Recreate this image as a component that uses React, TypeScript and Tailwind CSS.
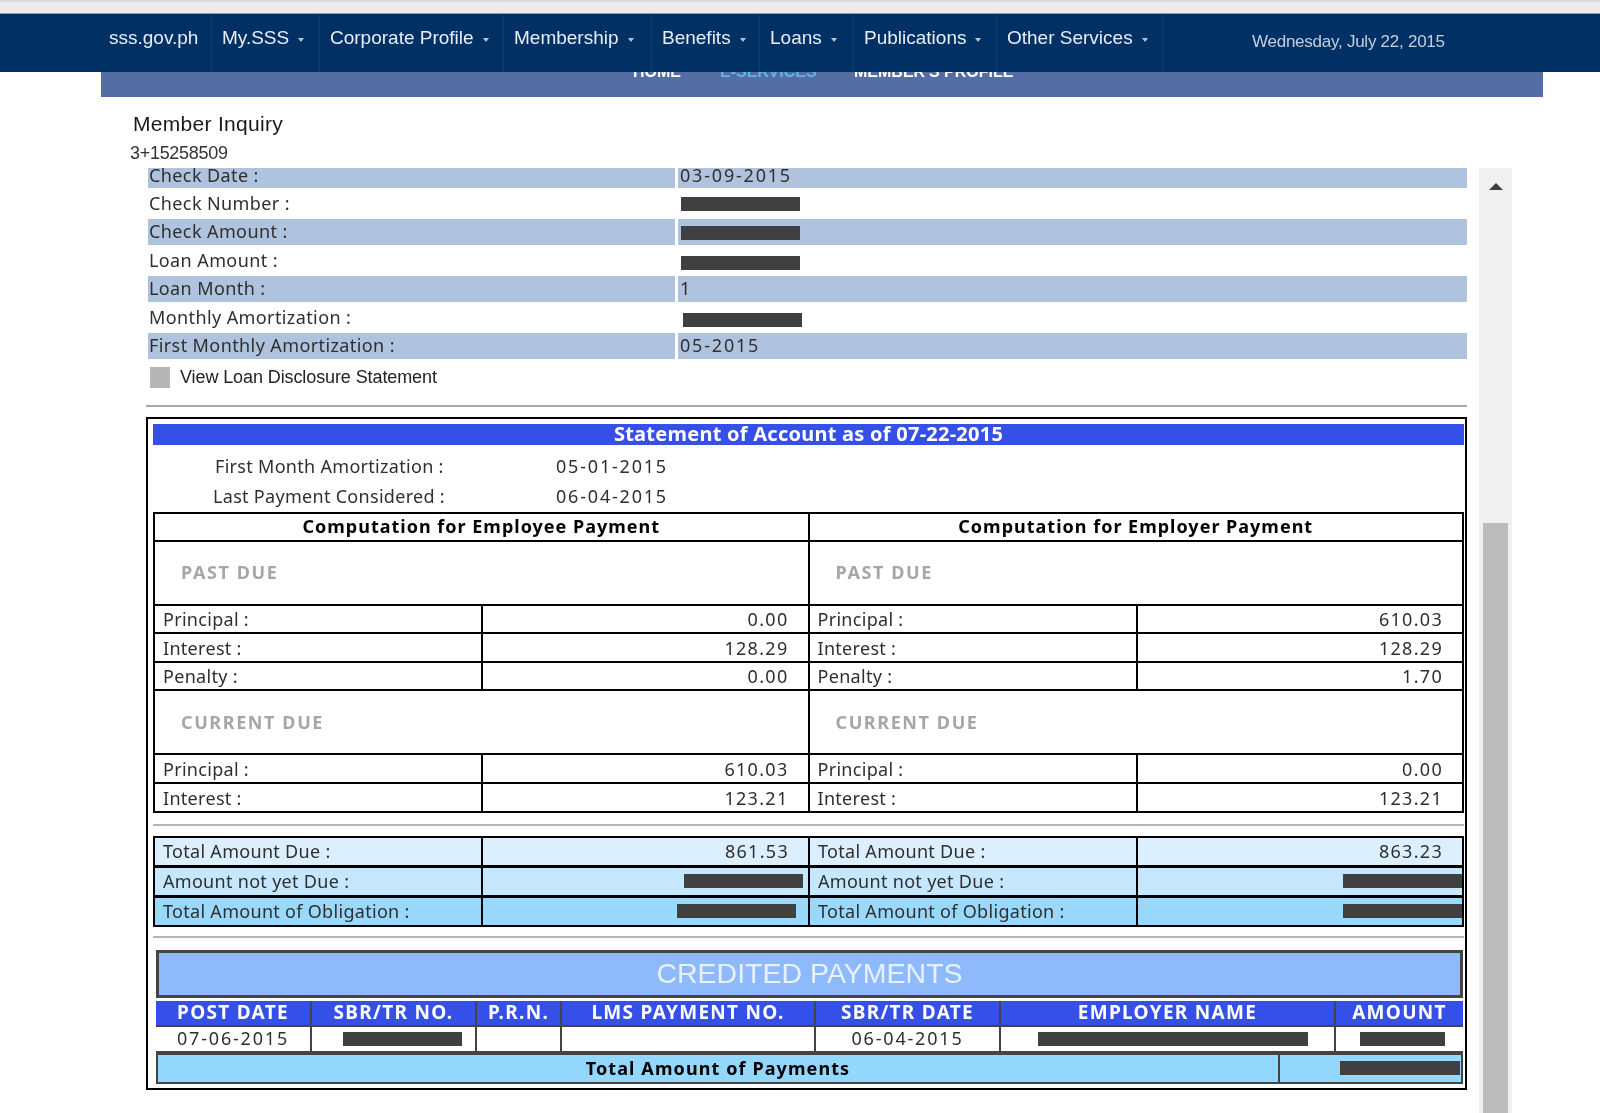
const navItems = [
  { label: 'sss.gov.ph', width: 'w-[111px]', caret: false },
  { label: 'My.SSS', width: 'w-[108px]', caret: true },
  { label: 'Corporate Profile', width: 'w-[184px]', caret: true },
  { label: 'Membership', width: 'w-[148px]', caret: true },
  { label: 'Benefits', width: 'w-[108px]', caret: true },
  { label: 'Loans', width: 'w-[94px]', caret: true },
  { label: 'Publications', width: 'w-[143px]', caret: true },
  { label: 'Other Services', width: 'w-[166px]', caret: true },
];

const loanRows = [
  { label: 'Check Date :', value: '03-09-2015', shaded: true },
  { label: 'Check Number :', shaded: false, redact: 'ml-[1px] mt-[2px]' },
  { label: 'Check Amount :', shaded: true, redact: 'ml-[1px] mt-[3px]' },
  { label: 'Loan Amount :', shaded: false, redact: 'ml-[1px] mt-[5px]' },
  { label: 'Loan Month :', value: '1', shaded: true },
  { label: 'Monthly Amortization :', shaded: false, redact: 'ml-[3px] mt-[5px]' },
  { label: 'First Monthly Amortization :', value: '05-2015', shaded: true },
];

const employee = {
  title: 'Computation for Employee Payment',
  past: ['0.00', '128.29', '0.00'],
  current: ['610.03', '123.21'],
};
const employer = {
  title: 'Computation for Employer Payment',
  past: ['610.03', '128.29', '1.70'],
  current: ['0.00', '123.21'],
};

const creditColumns = [
  { label: 'POST DATE', width: 'w-[156px]' },
  { label: 'SBR/TR NO.', width: 'w-[165px]' },
  { label: 'P.R.N.', width: 'w-[85px]' },
  { label: 'LMS PAYMENT NO.', width: 'w-[254px]' },
  { label: 'SBR/TR DATE', width: 'w-[185px]' },
  { label: 'EMPLOYER NAME', width: 'w-[335px]' },
  { label: 'AMOUNT', width: 'flex-1' },
];

function Redacted({ className }: { className: string }) {
  return <div className={`h-[14px] bg-[#404040] ${className}`} />;
}

function Caret() {
  return <span className="ml-[9px] mt-[3px] inline-block border-x-[3.5px] border-t-[4px] border-x-transparent border-t-[#b4c2d4]" />;
}

function AmountRow({ label, value, last }: { label: string; value: string; last?: boolean }) {
  return (
    <div className={`flex items-center border-black ${last ? 'h-[27px]' : 'h-[28.5px] border-b-2'}`}>
      <div className="flex h-full w-[328px] items-center border-r-2 border-black pl-[8px] pt-[2px]">{label}</div>
      <div className="flex-1 pr-[19px] pt-[2px] text-right tracking-[1.3px]">{value}</div>
    </div>
  );
}

function DueHeading({ children }: { children: string }) {
  return (
    <div className="flex h-[64px] items-center border-b-2 border-black pl-[26px] font-bold tracking-[1.6px] text-[#a6a6a6]">
      {children}
    </div>
  );
}

function Computation({ data, first }: { data: typeof employee; first?: boolean }) {
  return (
    <div className={`flex-1 ${first ? 'border-r-2 border-black' : ''}`}>
      <div className="flex h-[28px] items-center justify-center border-b-2 border-black font-bold tracking-[1px] text-black">{data.title}</div>
      <DueHeading>PAST DUE</DueHeading>
      <AmountRow label="Principal :" value={data.past[0]} />
      <AmountRow label="Interest :" value={data.past[1]} />
      <AmountRow label="Penalty :" value={data.past[2]} />
      <DueHeading>CURRENT DUE</DueHeading>
      <AmountRow label="Principal :" value={data.current[0]} />
      <AmountRow label="Interest :" value={data.current[1]} last />
    </div>
  );
}

function TotalRow({ label, left, right, color, redactLeft }: { label: string; left?: string; right?: string; color: string; redactLeft?: string }) {
  return (
    <div className={`flex h-[27px] ${color}`}>
      <div className="flex w-[655px]">
        <div className="flex w-[328px] items-center border-r-2 border-black pl-[8px]">{label}</div>
        <div className={`flex flex-1 items-center justify-end border-r-2 border-black tracking-[1.3px] ${left ? 'pr-[19px]' : ''}`}>
          {left ?? <Redacted className={`w-[119px] ${redactLeft}`} />}
        </div>
      </div>
      <div className="flex flex-1">
        <div className="flex w-[328px] items-center border-r-2 border-black pl-[8px]">{label}</div>
        <div className={`flex flex-1 items-center justify-end tracking-[1.3px] ${right ? 'pr-[19px]' : ''}`}>
          {right ?? <Redacted className="w-[119px]" />}
        </div>
      </div>
    </div>
  );
}

export default function App() {
  return (
    <div className="h-[1113px] w-[1600px] overflow-hidden bg-white font-['Noto_Sans',sans-serif] text-[18px] tracking-[0.3px] text-[#2f2f2f] blur-[0.5px]">
      {/* browser edge */}
      <div className="h-[14px] border-t-2 border-b border-t-[#d9d9d9] border-b-[#9a9a9a] bg-[#ececec]" />

      {/* main nav */}
      <div className="relative z-10 flex h-[58px] bg-[#003064] pl-[101px] font-['Liberation_Sans',sans-serif] text-[19px] tracking-normal text-[#e6edf5]">
        {navItems.map((item) => (
          <div key={item.label} className={`flex items-center border-r border-[#0a3f72] pb-[9px] pl-[10px] first:pl-[8px] ${item.width}`}>
            {item.label}
            {item.caret && <Caret />}
          </div>
        ))}
        <div className="pl-[89px] pt-[15px] text-[17px] tracking-[-0.25px] text-[#c3cfdc]">Wednesday, July 22, 2015</div>
      </div>

      {/* sub nav, mostly hidden under the main nav */}
      <div className="ml-[101px] h-[25px] w-[1442px] overflow-hidden bg-[#546ea3]">
        <div className="-mt-[12px] flex pl-[532px] font-['Liberation_Sans',sans-serif] text-[16px] font-bold tracking-normal text-white">
          <span className="w-[87px]">HOME</span>
          <span className="w-[134px] text-[#5fb4f0]">E-SERVICES</span>
          <span>MEMBER'S PROFILE</span>
        </div>
      </div>

      <div className="pl-[133px] pt-[13px] font-['Liberation_Sans',sans-serif] text-[21px] leading-[28px] tracking-[0.3px] text-[#1a1a1a]">Member Inquiry</div>
      <div className="h-[30px] pl-[130px] pt-[3px] font-['Liberation_Sans',sans-serif] text-[18px] leading-[24px] tracking-[-0.3px] text-[#333]">3+15258509</div>

      <div className="ml-[146px] flex">
        <div className="w-[1321px]">
          {/* loan details, first row clipped by the scroll */}
          <div className="flex flex-col gap-[2.5px] pl-[2px] tracking-[0.4px]">
            {loanRows.map((row, i) => (
              <div key={row.label} className={`flex gap-[3px] ${i === 0 ? 'h-[19.5px]' : 'h-[26px]'}`}>
                <div className={`flex w-[527px] items-center pl-[1px] ${i === 0 ? 'pb-[5px]' : ''} ${row.shaded ? 'bg-[#afc3de]' : ''}`}>{row.label}</div>
                <div className={`flex flex-1 items-center pl-[2px] tracking-[1.8px] ${i === 0 ? 'pb-[5px]' : ''} ${row.shaded ? 'bg-[#afc3de]' : ''}`}>
                  {row.value ?? <Redacted className={`w-[119px] ${row.redact}`} />}
                </div>
              </div>
            ))}
          </div>

          <div className="flex h-[34px] items-center pl-[4px] pt-[3px]">
            <div className="h-[21px] w-[20px] bg-[#b5b5b5]" />
            <span className="ml-[10px] font-['Liberation_Sans',sans-serif] text-[18px] tracking-[-0.1px] text-[#222]">View Loan Disclosure Statement</span>
          </div>

          <div className="mt-[12px] h-[2px] bg-[#a8a8a8]" />

          {/* statement box */}
          <div className="mt-[10px] h-[673px] border-2 border-black pl-[5px] pr-[1px] pt-[5px]">
            <div className="flex h-[21px] items-center justify-center bg-[#3550e8] text-[20px] font-bold tracking-[0.25px] text-white">
              Statement of Account as of 07-22-2015
            </div>
            <div className="flex h-[36px] items-center pt-[8px]">
              <span className="ml-[62px] w-[341px]">First Month Amortization :</span>
              <span className="tracking-[1.8px]">05-01-2015</span>
            </div>
            <div className="flex h-[30px] items-center pt-[2px]">
              <span className="ml-[60px] w-[343px]">Last Payment Considered :</span>
              <span className="tracking-[1.8px]">06-04-2015</span>
            </div>

            <div className="mt-[1px] flex border-2 border-black">
              <Computation data={employee} first />
              <Computation data={employer} />
            </div>

            <div className="mt-[11px] h-[2px] bg-[#b5b5b5]" />

            <div className="mt-[10px] flex flex-col gap-[3px] border-2 border-black bg-black">
              <TotalRow label="Total Amount Due :" left="861.53" right="863.23" color="bg-[#dceffe]" />
              <TotalRow label="Amount not yet Due :" color="bg-[#c5e8ff]" redactLeft="mr-[5px]" />
              <TotalRow label="Total Amount of Obligation :" color="bg-[#99d9ff]" redactLeft="mr-[12px]" />
            </div>

            <div className="mt-[9px] h-[2px] bg-[#b5b5b5]" />

            {/* credited payments */}
            <div className="ml-[3px] mr-[1px]">
              <div className="mt-[12px] flex h-[48px] items-center justify-center border-[3px] border-[#444] bg-[#8ebafb] font-['Liberation_Sans',sans-serif] text-[28.5px] tracking-normal text-[#e8f1ff]">
                CREDITED PAYMENTS
              </div>
              <div className="mt-[3px] flex h-[24px] bg-[#3550e8] text-[19px] font-bold tracking-[1.3px] text-white">
                {creditColumns.map((col) => (
                  <div key={col.label} className={`flex items-center justify-center border-r-2 border-[#444] last:border-r-0 ${col.width}`}>
                    {col.label}
                  </div>
                ))}
              </div>
              <div className="flex h-[30px] border-t-2 border-b-[4px] border-[#444]">
                <div className="flex w-[156px] items-center justify-center border-r-2 border-[#444] tracking-[1.8px]">07-06-2015</div>
                <div className="flex w-[165px] items-center justify-end border-r-2 border-[#444] pr-[13px]">
                  <Redacted className="w-[119px]" />
                </div>
                <div className="w-[85px] border-r-2 border-[#444]" />
                <div className="w-[254px] border-r-2 border-[#444]" />
                <div className="flex w-[185px] items-center justify-center border-r-2 border-[#444] tracking-[1.8px]">06-04-2015</div>
                <div className="flex w-[335px] items-center border-r-2 border-[#444] pl-[37px]">
                  <Redacted className="w-[270px]" />
                </div>
                <div className="flex flex-1 items-center pl-[24px]">
                  <Redacted className="w-[85px]" />
                </div>
              </div>
              <div className="flex h-[29px] border-2 border-t-0 border-[#444] bg-[#93d7fd]">
                <div className="flex w-[1122px] items-center justify-center border-r-2 border-[#444] font-bold tracking-[1.1px] text-black">Total Amount of Payments</div>
                <div className="flex flex-1 items-center justify-end pr-[1px]">
                  <Redacted className="w-[120px]" />
                </div>
              </div>
            </div>
          </div>
        </div>

        {/* scrollbar */}
        <div className="ml-[12px] flex h-[945px] w-[33px] flex-col items-center bg-[#f0f0f0]">
          <div className="mt-[15px] border-x-[7px] border-b-[7px] border-x-transparent border-b-[#404040]" />
          <div className="mt-[333px] w-[25px] flex-1 bg-[#bcbcbc]" />
        </div>
      </div>
    </div>
  );
}
